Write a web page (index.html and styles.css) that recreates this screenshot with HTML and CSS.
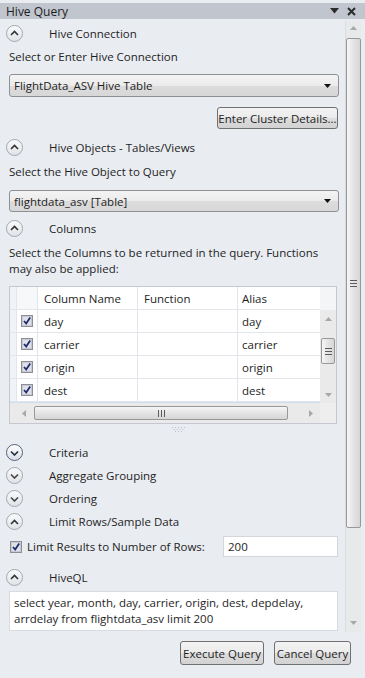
FILE: index.html
```html
<!DOCTYPE html>
<html>
<head>
<meta charset="utf-8">
<link rel="stylesheet" href="styles.css">
</head>
<body>
<div class="window">
  <div class="titlebar">
    <span class="title">Hive Query</span>
    <span class="tb-icons">
      <svg width="9" height="6" viewBox="0 0 9 6"><path d="M0 0 H9 L4.5 5.5 Z" fill="#2b2b2b"/></svg>
      <svg width="9" height="9" viewBox="0 0 9 9"><path d="M1 1 L8 8 M8 1 L1 8" stroke="#2b2b2b" stroke-width="2"/></svg>
    </span>
  </div>
  <div class="main">
    <div class="content">
      <div class="sec-head h1"><span class="chev"><svg width="9" height="6" viewBox="0 0 9 6"><path d="M1 5 L4.5 1.5 L8 5" fill="none" stroke="#333" stroke-width="1.6"/></svg></span><span class="sec-title">Hive Connection</span></div>
      <div class="label l1">Select or Enter Hive Connection</div>
      <div class="combo c1"><span>FlightData_ASV Hive Table</span><svg width="7" height="4" viewBox="0 0 7 4"><path d="M0 0 H7 L3.5 4 Z" fill="#111"/></svg></div>
      <div class="btn-row"><span class="btn cluster">Enter Cluster Details...</span></div>

      <div class="sec-head h2"><span class="chev"><svg width="9" height="6" viewBox="0 0 9 6"><path d="M1 5 L4.5 1.5 L8 5" fill="none" stroke="#333" stroke-width="1.6"/></svg></span><span class="sec-title">Hive Objects - Tables/Views</span></div>
      <div class="label l2">Select the Hive Object to Query</div>
      <div class="combo c2"><span>flightdata_asv [Table]</span><svg width="7" height="4" viewBox="0 0 7 4"><path d="M0 0 H7 L3.5 4 Z" fill="#111"/></svg></div>

      <div class="sec-head h3"><span class="chev"><svg width="9" height="6" viewBox="0 0 9 6"><path d="M1 5 L4.5 1.5 L8 5" fill="none" stroke="#333" stroke-width="1.6"/></svg></span><span class="sec-title">Columns</span></div>
      <div class="label l3">Select the Columns to be returned in the query. Functions may also be applied:</div>

      <div class="grid">
        <div class="grid-top">
          <div class="grid-table">
            <div class="row head">
              <span class="cell rh"></span><span class="cell cb"></span><span class="cell cn">Column Name</span><span class="cell fn">Function</span><span class="cell al">Alias</span>
            </div>
            <div class="row">
              <span class="cell rh"></span><span class="cell cb"><svg class="chk" width="12" height="12" viewBox="0 0 12 12"><rect x="0.5" y="0.5" width="11" height="11" fill="#f6f6f8" stroke="#8e8f95"/><rect x="1.5" y="1.5" width="9" height="9" fill="#dfe0ea" stroke="#c6c8d4"/><path d="M3 6 L5.2 8.6 L9.2 2.6" fill="none" stroke="#1f2d6b" stroke-width="1.8"/></svg></span><span class="cell cn">day</span><span class="cell fn"></span><span class="cell al">day</span>
            </div>
            <div class="row">
              <span class="cell rh"></span><span class="cell cb"><svg class="chk" width="12" height="12" viewBox="0 0 12 12"><rect x="0.5" y="0.5" width="11" height="11" fill="#f6f6f8" stroke="#8e8f95"/><rect x="1.5" y="1.5" width="9" height="9" fill="#dfe0ea" stroke="#c6c8d4"/><path d="M3 6 L5.2 8.6 L9.2 2.6" fill="none" stroke="#1f2d6b" stroke-width="1.8"/></svg></span><span class="cell cn">carrier</span><span class="cell fn"></span><span class="cell al">carrier</span>
            </div>
            <div class="row">
              <span class="cell rh"></span><span class="cell cb"><svg class="chk" width="12" height="12" viewBox="0 0 12 12"><rect x="0.5" y="0.5" width="11" height="11" fill="#f6f6f8" stroke="#8e8f95"/><rect x="1.5" y="1.5" width="9" height="9" fill="#dfe0ea" stroke="#c6c8d4"/><path d="M3 6 L5.2 8.6 L9.2 2.6" fill="none" stroke="#1f2d6b" stroke-width="1.8"/></svg></span><span class="cell cn">origin</span><span class="cell fn"></span><span class="cell al">origin</span>
            </div>
            <div class="row">
              <span class="cell rh"></span><span class="cell cb"><svg class="chk" width="12" height="12" viewBox="0 0 12 12"><rect x="0.5" y="0.5" width="11" height="11" fill="#f6f6f8" stroke="#8e8f95"/><rect x="1.5" y="1.5" width="9" height="9" fill="#dfe0ea" stroke="#c6c8d4"/><path d="M3 6 L5.2 8.6 L9.2 2.6" fill="none" stroke="#1f2d6b" stroke-width="1.8"/></svg></span><span class="cell cn">dest</span><span class="cell fn"></span><span class="cell al">dest</span>
            </div>
            <div class="row-end"></div>
          </div>
          <div class="grid-vs">
            <div class="vs-headcell"></div>
            <div class="vs-track">
              <svg class="arrow" width="7" height="4" viewBox="0 0 7 4"><path d="M0 4 L3.5 0 L7 4 Z" fill="#a8a8a8"/></svg>
              <div class="vs-spacer s1"></div>
              <div class="vs-thumb small"><span class="grip-h"></span><span class="grip-h"></span><span class="grip-h"></span></div>
              <div class="vs-spacer s2"></div>
              <svg class="arrow" width="7" height="4" viewBox="0 0 7 4"><path d="M0 0 H7 L3.5 4 Z" fill="#a8a8a8"/></svg>
            </div>
          </div>
        </div>
        <div class="grid-bottom">
          <div class="hscroll">
            <span class="h-arrow left"><svg width="4" height="7" viewBox="0 0 4 7"><path d="M4 0 V7 L0 3.5 Z" fill="#a8a8a8"/></svg></span>
            <div class="h-thumb"><span class="grip-v"></span><span class="grip-v"></span><span class="grip-v"></span></div>
            <span class="h-arrow right"><svg width="4" height="7" viewBox="0 0 4 7"><path d="M0 0 V7 L4 3.5 Z" fill="#a8a8a8"/></svg></span>
          </div>
          <div class="corner"></div>
        </div>
      </div>
      <div class="resize-grip"><svg width="14" height="6" viewBox="0 0 14 6">
        <g fill="#b9bec6"><rect x="1" y="0" width="1" height="1"/><rect x="4" y="0" width="1" height="1"/><rect x="7" y="0" width="1" height="1"/><rect x="10" y="0" width="1" height="1"/><rect x="13" y="0" width="1" height="1"/>
        <rect x="2.5" y="2" width="1" height="1"/><rect x="5.5" y="2" width="1" height="1"/><rect x="8.5" y="2" width="1" height="1"/><rect x="11.5" y="2" width="1" height="1"/>
        <rect x="4" y="4" width="1" height="1"/><rect x="7" y="4" width="1" height="1"/><rect x="10" y="4" width="1" height="1"/></g></svg></div>

      <div class="sec-head hc active"><span class="chev"><svg width="9" height="6" viewBox="0 0 9 6"><path d="M1 1.5 L4.5 5 L8 1.5" fill="none" stroke="#1f2a3d" stroke-width="1.6"/></svg></span><span class="sec-title">Criteria</span></div>
      <div class="sec-head hc"><span class="chev"><svg width="9" height="6" viewBox="0 0 9 6"><path d="M1 1.5 L4.5 5 L8 1.5" fill="none" stroke="#444" stroke-width="1.6"/></svg></span><span class="sec-title">Aggregate Grouping</span></div>
      <div class="sec-head hc"><span class="chev"><svg width="9" height="6" viewBox="0 0 9 6"><path d="M1 1.5 L4.5 5 L8 1.5" fill="none" stroke="#444" stroke-width="1.6"/></svg></span><span class="sec-title">Ordering</span></div>
      <div class="sec-head hc"><span class="chev"><svg width="9" height="6" viewBox="0 0 9 6"><path d="M1 5 L4.5 1.5 L8 5" fill="none" stroke="#333" stroke-width="1.6"/></svg></span><span class="sec-title">Limit Rows/Sample Data</span></div>

      <div class="limit-row">
        <span class="limit-check"><svg width="12" height="12" viewBox="0 0 12 12"><rect x="0.5" y="0.5" width="11" height="11" fill="#f6f6f8" stroke="#8e8f95"/><rect x="1.5" y="1.5" width="9" height="9" fill="#dfe0ea" stroke="#c6c8d4"/><path d="M3 6 L5.2 8.6 L9.2 2.6" fill="none" stroke="#1f2d6b" stroke-width="1.8"/></svg><span>Limit Results to Number of Rows:</span></span>
        <span class="textbox">200</span>
      </div>

      <div class="sec-head hq"><span class="chev"><svg width="9" height="6" viewBox="0 0 9 6"><path d="M1 5 L4.5 1.5 L8 5" fill="none" stroke="#333" stroke-width="1.6"/></svg></span><span class="sec-title">HiveQL</span></div>
      <div class="query">select year, month, day, carrier, origin, dest, depdelay, arrdelay from flightdata_asv limit 200</div>
    </div>
    <div class="vscroll">
      <svg class="arrow up" width="7" height="4" viewBox="0 0 7 4"><path d="M0 4 L3.5 0 L7 4 Z" fill="#a8a8a8"/></svg>
      <div class="vs-thumb big"><span class="grip-h"></span><span class="grip-h"></span><span class="grip-h"></span></div>
      <div class="vs-fill"></div>
      <svg class="arrow down" width="7" height="4" viewBox="0 0 7 4"><path d="M0 0 H7 L3.5 4 Z" fill="#a8a8a8"/></svg>
    </div>
  </div>
  <div class="footer">
    <span class="btn exec">Execute Query</span>
    <span class="btn cancel">Cancel Query</span>
  </div>
</div>
</body>
</html>
```
FILE: styles.css
```css
* { box-sizing: border-box; }
html, body { margin: 0; padding: 0; }
body {
  width: 365px;
  height: 678px;
  overflow: hidden;
  background: #e9ecf1;
  font-family: "Open Sans", "Noto Sans", sans-serif;
  font-size: 11.5px;
  color: #1e1e1e;
}
.window { width: 365px; height: 678px; display: flex; flex-direction: column; }

.titlebar {
  margin-top: 3px;
  height: 16px;
  background: #c1c5cd;
  display: flex;
  align-items: center;
  justify-content: space-between;
  padding: 0 9px 0 6px;
}
.title { font-size: 12px; color: #1e1e1e; }
.tb-icons { display: flex; align-items: center; gap: 8px; }

.main {
  margin-top: 2px;
  height: 611px;
  display: flex;
}
.content {
  width: 345px;
  padding: 1px 6px 0 9px;
  display: flex;
  flex-direction: column;
}

.sec-head {
  height: 22px;
  display: flex;
  align-items: center;
  margin-left: -3px;
}
.chev {
  width: 17px;
  height: 17px;
  border-radius: 50%;
  border: 1px solid #a3a8b0;
  background: linear-gradient(#fbfbfc, #dfe2e7);
  display: flex;
  align-items: center;
  justify-content: center;
  flex: none;
}
.active .chev { border-color: #56637a; background: linear-gradient(#ffffff, #d8dde6); }
.sec-title { margin-left: 26px; }
.h2 { margin-top: 7px; }
.h3 { margin-top: 5px; }
.hc { height: 23px; }
.hq { margin-top: 9px; }

.label { line-height: 16px; }
.l1 { margin-top: 5px; }
.l2 { margin-top: 6px; }
.l3 { margin-top: 6px; }

.combo {
  height: 23px;
  border: 1px solid #8e9094;
  border-radius: 3px;
  background: linear-gradient(#f4f4f4 0%, #ebebeb 50%, #dcdcdc 51%, #d7d7d7 100%);
  display: flex;
  align-items: center;
  justify-content: space-between;
  padding: 0 7px 0 4px;
}
.c1 { margin-top: 9px; }
.c2 { margin-top: 10px; height: 22px; }

.btn-row { margin-top: 10px; display: flex; justify-content: flex-end; padding-right: 1px; }
.btn {
  height: 22px;
  border: 1px solid #707070;
  border-radius: 3px;
  background: linear-gradient(#f3f3f3 0%, #ebebeb 50%, #dddddd 51%, #d2d2d2 100%);
  display: inline-flex;
  align-items: center;
  justify-content: center;
  color: #1e1e1e;
}
.cluster { width: 121px; }

.grid {
  margin-top: 9px;
  width: 328px;
  height: 138px;
  border: 1px solid #c5c9cf;
  background: #ffffff;
  display: flex;
  flex-direction: column;
}
.grid-top { display: flex; height: 116px; }
.grid-table { width: 310px; display: flex; flex-direction: column; }
.row { display: flex; height: 23px; border-bottom: 1px solid #e2e5ea; }
.cell {
  height: 100%;
  display: flex;
  align-items: center;
  border-right: 1px solid #e2e5ea;
  padding-left: 6px;
}
.rh { width: 7px; padding: 0; background: #f1f3f6; }
.cb { width: 21px; padding-left: 4px; }
.cn { width: 100px; }
.fn { width: 100px; }
.al { width: 82px; border-right: none; padding-left: 4px; }
.head .cb { background: #f7f8fa; }
.row-end { height: 1px; background: #cde0ef; margin-top: auto; }

.grid-vs { width: 16px; display: flex; flex-direction: column; }
.vs-headcell { height: 23px; background: #f4f5f7; }
.vs-track {
  flex: 1;
  background: #eaeaea;
  display: flex;
  flex-direction: column;
  align-items: center;
  padding: 7px 0 6px;
}
.vs-spacer.s1 { height: 17px; }
.vs-spacer.s2 { flex: 1; }
.vs-thumb {
  width: 14px;
  border: 1px solid #989898;
  border-radius: 2px;
  background: linear-gradient(90deg, #f6f6f6, #e4e4e4 50%, #d6d6d6);
  display: flex;
  flex-direction: column;
  align-items: center;
  justify-content: center;
  gap: 2px;
}
.vs-thumb.small { height: 26px; }
.grip-h { width: 7px; height: 1px; background: #5a5a5a; }

.grid-bottom { display: flex; height: 20px; }
.hscroll {
  width: 310px;
  background: #eaeaea;
  display: flex;
  align-items: center;
}
.h-arrow { display: flex; align-items: center; height: 100%; }
.h-arrow.left { width: 24px; justify-content: flex-end; padding-right: 8px; }
.h-arrow.right { flex: 1; padding-left: 21px; }
.h-thumb {
  width: 254px;
  height: 14px;
  border: 1px solid #989898;
  border-radius: 2px;
  background: linear-gradient(#f6f6f6, #e4e4e4 50%, #d6d6d6);
  display: flex;
  align-items: center;
  justify-content: center;
  gap: 2px;
}
.grip-v { width: 1px; height: 7px; background: #5a5a5a; }
.corner { width: 16px; background: #eeeeee; }

.resize-grip { height: 17px; display: flex; justify-content: center; padding-top: 3px; padding-left: 8px; }

.limit-row {
  margin-top: 3px;
  height: 21px;
  display: flex;
  align-items: center;
  justify-content: space-between;
  padding-right: 1px;
}
.limit-check { display: flex; align-items: center; gap: 5px; padding-left: 1px; }
.textbox {
  width: 115px;
  height: 21px;
  background: #ffffff;
  border: 1px solid #d3d6db;
  display: flex;
  align-items: center;
  padding-left: 4px;
}

.query {
  margin-top: 3px;
  height: 40px;
  background: #ffffff;
  border: 1px solid #d8dbe0;
  padding: 3px 4px 0 4px;
  line-height: 16px;
  width: 329px;
}

.vscroll {
  width: 16px;
  background: #e8e9eb;
  border-left: 1px solid #d9dce1;
  display: flex;
  flex-direction: column;
  align-items: center;
  padding-top: 5px;
  padding-bottom: 7px;
}
.vs-thumb.big { margin-top: 8px; height: 490px; width: 15px; }
.vs-fill { flex: 1; }

.footer {
  margin-top: 9px;
  display: flex;
  justify-content: flex-end;
  gap: 10px;
  padding-right: 14px;
}
.exec { width: 84px; height: 24px; }
.cancel { width: 77px; height: 24px; }
```
